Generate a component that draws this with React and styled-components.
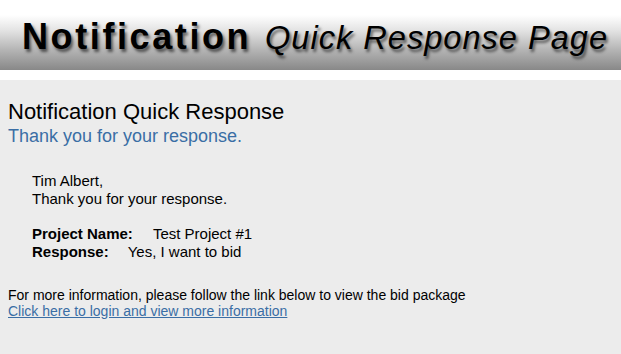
import React from "react";
import styled, { createGlobalStyle } from "styled-components";

const GlobalStyle = createGlobalStyle`
  html, body {
    margin: 0;
    padding: 0;
    background: #ffffff;
  }
  body {
    font-family: "Liberation Sans", Arial, sans-serif;
  }
`;

const Page = styled.div`
  display: flex;
  flex-direction: column;
  width: 621px;
  height: 354px;
  overflow: hidden;
  background: #ffffff;
`;

const Banner = styled.header`
  height: 70px;
  box-sizing: border-box;
  padding: 17px 0 0 22px;
  background: linear-gradient(
    to bottom,
    #ffffff 0px,
    #ffffff 15px,
    #e4e4e4 30px,
    #b4b4b4 50px,
    #888888 70px
  );
  white-space: nowrap;
  line-height: 40px;
  color: #000;
  text-shadow: 2px 3px 3px rgba(0, 0, 0, 0.55);
`;

const BannerStrong = styled.span`
  font-size: 36px;
  font-weight: bold;
  letter-spacing: 2.6px;
`;

const BannerItalic = styled.span`
  display: inline-block;
  margin-left: 14px;
  font-size: 34px;
  font-style: italic;
  letter-spacing: 1px;
  transform: scaleX(0.96);
  transform-origin: left center;
`;

const Spacer = styled.div`
  height: 10px;
  background: #ffffff;
`;

const Main = styled.main`
  flex: 1;
  background: #ececec;
  padding: 19px 8px 0 8px;
`;

const Heading = styled.h1`
  margin: 0;
  font-size: 22px;
  line-height: 26px;
  font-weight: normal;
  color: #000;
`;

const SubHeading = styled.h2`
  margin: 0;
  font-size: 18px;
  line-height: 22px;
  font-weight: normal;
  color: #3a6ea5;
`;

const Block = styled.div`
  margin: ${(p) => p.$top || 0}px 0 0 ${(p) => (p.$indent ? 24 : 0)}px;
  font-size: ${(p) => p.$size || 15}px;
  line-height: ${(p) => p.$lh || 18}px;
  color: #000;
`;

const Line = styled.div``;

const Label = styled.span`
  font-weight: bold;
  margin-right: ${(p) => p.$gap}px;
`;

const Link = styled.a`
  color: #3a6ea5;
  text-decoration: underline;
  cursor: pointer;
`;

export default function App() {
  return (
    <>
      <GlobalStyle />
      <Page>
        <Banner>
          <BannerStrong>Notification</BannerStrong>
          <BannerItalic>Quick Response Page</BannerItalic>
        </Banner>
        <Spacer />
        <Main>
          <Heading>Notification Quick Response</Heading>
          <SubHeading>Thank you for your response.</SubHeading>
          <Block $indent $top={25}>
            <Line>Tim Albert,</Line>
            <Line>Thank you for your response.</Line>
          </Block>
          <Block $indent $top={17}>
            <Line>
              <Label $gap={20}>Project Name:</Label>Test Project #1
            </Line>
            <Line>
              <Label $gap={19}>Response:</Label>Yes, I want to bid
            </Line>
          </Block>
          <Block $top={26} $size={14} $lh={16}>
            <Line>
              For more information, please follow the link below to view the
              bid package
            </Line>
            <Line>
              <Link href="#">Click here to login and view more information</Link>
            </Line>
          </Block>
        </Main>
      </Page>
    </>
  );
}
